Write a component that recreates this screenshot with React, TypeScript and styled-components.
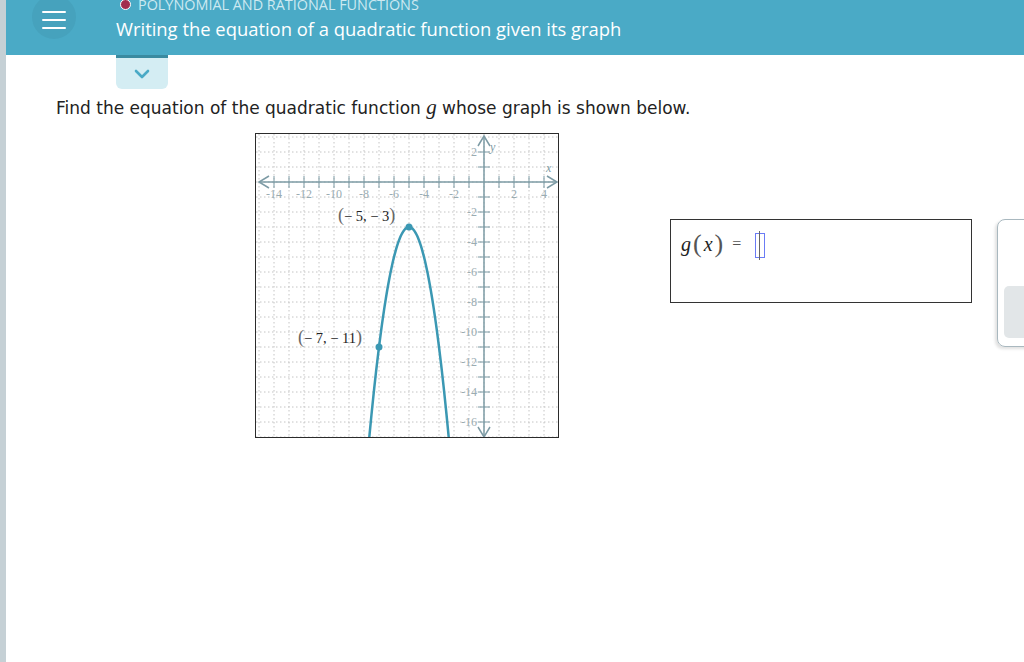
import React from 'react';
import styled, { createGlobalStyle } from 'styled-components';

const GlobalStyle = createGlobalStyle`
  html, body {
    margin: 0;
    padding: 0;
    background: #ffffff;
    overflow: hidden;
  }
  #root {
    height: 662px;
  }
`;

const Page = styled.div`
  display: flex;
  height: 662px;
  width: 1024px;
  overflow: hidden;
`;

const SideStrip = styled.div`
  width: 6px;
  flex: none;
  background: #c5d0d5;
`;

const Main = styled.div`
  flex: 1;
  display: flex;
  flex-direction: column;
  min-width: 0;
`;

const Header = styled.header`
  height: 55px;
  background: #4aaac6;
  display: flex;
  align-items: flex-start;
  overflow: hidden;
  flex: none;
`;

const MenuButton = styled.button`
  width: 44px;
  height: 44px;
  margin: -5px 0 0 26px;
  border: none;
  border-radius: 50%;
  background: #46a2bd;
  display: flex;
  flex-direction: column;
  align-items: center;
  justify-content: center;
  gap: 6px;
  padding: 5px 0 0;
  flex: none;
`;

const MenuLine = styled.span`
  display: block;
  width: 24px;
  height: 2px;
  background: #ffffff;
  border-radius: 1px;
`;

const HeaderText = styled.div`
  margin-left: 40px;
  display: flex;
  flex-direction: column;
  font-family: 'Open Sans', 'Liberation Sans', sans-serif;
`;

const Category = styled.div`
  display: flex;
  align-items: center;
  gap: 7px;
  margin-top: -6px;
  margin-left: 4px;
  height: 20px;
  font-size: 14.4px;
  color: #cde9f1;
  text-transform: uppercase;
`;

const Dot = styled.span`
  width: 11px;
  height: 11px;
  border-radius: 50%;
  background: #a12e4e;
  border: 1.5px solid #ffffff;
  box-sizing: border-box;
`;

const Title = styled.div`
  margin-top: 3px;
  font-size: 18.4px;
  color: #ffffff;
  line-height: 24px;
`;

const Content = styled.div`
  padding-left: 50px;
  display: flex;
  flex-direction: column;
`;

const Tab = styled.div`
  margin-left: 60px;
  width: 52px;
  height: 34px;
  box-sizing: border-box;
  border-top: 3px solid #3a8aa0;
  border-radius: 0 0 6px 6px;
  background: #d4edf3;
  display: flex;
  align-items: center;
  justify-content: center;
`;

const Question = styled.p`
  margin: 8px 0 0;
  font-family: 'DejaVu Sans', Verdana, sans-serif;
  font-size: 17px;
  line-height: 20px;
  color: #222222;
`;

const MathVar = styled.span`
  font-family: 'Liberation Serif', 'DejaVu Serif', serif;
  font-style: italic;
  font-size: 21px;
`;

const Row = styled.div`
  display: flex;
  align-items: flex-start;
  margin-top: 15px;
`;

const GraphBox = styled.div`
  margin-left: 199px;
  width: 304px;
  height: 305px;
  box-sizing: border-box;
  border: 1.5px solid #2b2b2b;
  flex: none;
  overflow: hidden;
`;

const AnswerBox = styled.div`
  margin: 86px 0 0 111px;
  width: 302px;
  height: 84px;
  box-sizing: border-box;
  border: 1.5px solid #333333;
  flex: none;
  padding: 10px 0 0 10px;
  display: flex;
  align-items: flex-start;
`;

const Expr = styled.span`
  font-family: 'Liberation Serif', 'DejaVu Serif', serif;
  font-size: 20px;
  color: #222222;
  line-height: 28px;
  display: flex;
  align-items: center;
`;

const Italic = styled.span`
  font-style: italic;
`;

const Paren = styled.span`
  font-size: 26px;
  color: #555555;
  margin: 0 2px;
`;

const Equals = styled.span`
  font-size: 16px;
  color: #555555;
  margin: 0 14px 0 7px;
`;

const Cursor = styled.span`
  position: relative;
  width: 10px;
  height: 25px;
  box-sizing: border-box;
  border: 1.5px solid #6b7cf5;
  display: inline-block;
  margin-top: 2px;
  &::after {
    content: '';
    position: absolute;
    left: 3px;
    top: -3px;
    width: 1px;
    height: 29px;
    background: #666666;
  }
`;

const SideCard = styled.div`
  margin: 86px 0 0 25px;
  width: 60px;
  height: 128px;
  box-sizing: border-box;
  border: 1px solid #a9b8bf;
  border-radius: 8px;
  box-shadow: -2px 2px 3px rgba(0, 0, 0, 0.12);
  flex: none;
  padding: 66px 0 0 6px;
`;

const CardSlot = styled.div`
  height: 52px;
  background: #e2e6e8;
  border-radius: 5px;
`;

// graph mapping: 15px per unit, origin at (228, 48) inside the box
const ox = 228;
const oy = 48;
const s = 15;
const X = (u: number) => ox + s * u;
const Y = (v: number) => oy - s * v;

const range = (a: number, b: number) => {
  const out: number[] = [];
  for (let i = a; i <= b; i++) out.push(i);
  return out;
};

const Graph: React.FC = () => {
  const axis = '#7d9ba5';
  const label = '#9aacb2';
  const curve: string[] = [];
  for (let u = -7.7; u <= -2.3; u += 0.05) {
    const v = -2 * (u + 5) * (u + 5) - 3;
    curve.push(`${X(u).toFixed(2)},${Y(v).toFixed(2)}`);
  }
  return (
    <svg width="304" height="305" viewBox="0 0 304 305">
      <g stroke="#c4c4c4" strokeWidth="1" strokeDasharray="1.5 2.5">
        {range(-15, 5).map((u) => (
          <line key={`gx${u}`} x1={X(u)} y1={0} x2={X(u)} y2={305} />
        ))}
        {range(-17, 3).map((v) => (
          <line key={`gy${v}`} x1={0} y1={Y(v)} x2={304} y2={Y(v)} />
        ))}
      </g>
      <g stroke={axis} strokeWidth="1.5" fill="none">
        <line x1={3} y1={oy} x2={301} y2={oy} />
        <line x1={ox} y1={2} x2={ox} y2={303} />
        <polyline points={`${13},${oy - 6} ${3},${oy} ${13},${oy + 6}`} />
        <polyline points={`${291},${oy - 6} ${301},${oy} ${291},${oy + 6}`} />
        <polyline points={`${ox - 6},${12} ${ox},${2} ${ox + 6},${12}`} />
        <polyline points={`${ox - 6},${293} ${ox},${303} ${ox + 6},${293}`} />
      </g>
      <g stroke={axis} strokeWidth="1">
        {range(-14, 4).filter((u) => u !== 0).map((u) => (
          <line key={`tx${u}`} x1={X(u)} y1={oy - 6} x2={X(u)} y2={oy + 6} />
        ))}
        {range(-16, 2).filter((v) => v !== 0).map((v) => (
          <line key={`ty${v}`} x1={ox - 6} y1={Y(v)} x2={ox + 6} y2={Y(v)} />
        ))}
      </g>
      <g fill={label} fontFamily="'Liberation Serif', serif" fontSize="12">
        {[-14, -12, -10, -8, -6, -4, -2, 2, 4].map((u) => (
          <text key={`lx${u}`} x={X(u)} y={oy + 16} textAnchor="middle">
            {u < 0 ? `-${-u}` : u}
          </text>
        ))}
        {[2, -2, -4, -6, -8, -10, -12, -14, -16].map((v) => (
          <text key={`ly${v}`} x={ox - 7} y={Y(v) + 4} textAnchor="end">
            {v < 0 ? `-${-v}` : v}
          </text>
        ))}
      </g>
      <g fill="#7d9ba5" fontFamily="'Liberation Serif', serif" fontStyle="italic" fontSize="12">
        <text x={290} y={38}>x</text>
        <text x={234} y={17}>y</text>
      </g>
      <polyline points={curve.join(' ')} fill="none" stroke="#3b98b3" strokeWidth="2.5" />
      <circle cx={X(-5)} cy={Y(-3)} r="3.5" fill="#3b98b3" />
      <circle cx={X(-7)} cy={Y(-11)} r="3.5" fill="#3b98b3" />
      <g fontFamily="'Liberation Serif', serif" fontSize="14.5" fill="#222222">
        <text x={82} y={87}>
          <tspan fill="#666666" fontSize="18">(</tspan>
          <tspan>− 5, − 3</tspan>
          <tspan fill="#666666" fontSize="18">)</tspan>
        </text>
        <text x={42} y={209}>
          <tspan fill="#666666" fontSize="18">(</tspan>
          <tspan>− 7, − 11</tspan>
          <tspan fill="#666666" fontSize="18">)</tspan>
        </text>
      </g>
    </svg>
  );
};

const Chevron: React.FC = () => (
  <svg width="16" height="10" viewBox="0 0 16 10">
    <polyline points="2,2 8,8 14,2" fill="none" stroke="#4aaac6" strokeWidth="2.6" strokeLinecap="round" strokeLinejoin="round" />
  </svg>
);

export default function App() {
  return (
    <>
      <GlobalStyle />
      <Page>
        <SideStrip />
        <Main>
          <Header>
            <MenuButton aria-label="menu">
              <MenuLine />
              <MenuLine />
              <MenuLine />
            </MenuButton>
            <HeaderText>
              <Category>
                <Dot />
                Polynomial and rational functions
              </Category>
              <Title>Writing the equation of a quadratic function given its graph</Title>
            </HeaderText>
          </Header>
          <Content>
            <Tab>
              <Chevron />
            </Tab>
            <Question>
              Find the equation of the quadratic function <MathVar>g</MathVar> whose graph is shown below.
            </Question>
            <Row>
              <GraphBox>
                <Graph />
              </GraphBox>
              <AnswerBox>
                <Expr>
                  <Italic>g</Italic>
                  <Paren>(</Paren>
                  <Italic>x</Italic>
                  <Paren>)</Paren>
                  <Equals>=</Equals>
                  <Cursor />
                </Expr>
              </AnswerBox>
              <SideCard>
                <CardSlot />
              </SideCard>
            </Row>
          </Content>
        </Main>
      </Page>
    </>
  );
}
